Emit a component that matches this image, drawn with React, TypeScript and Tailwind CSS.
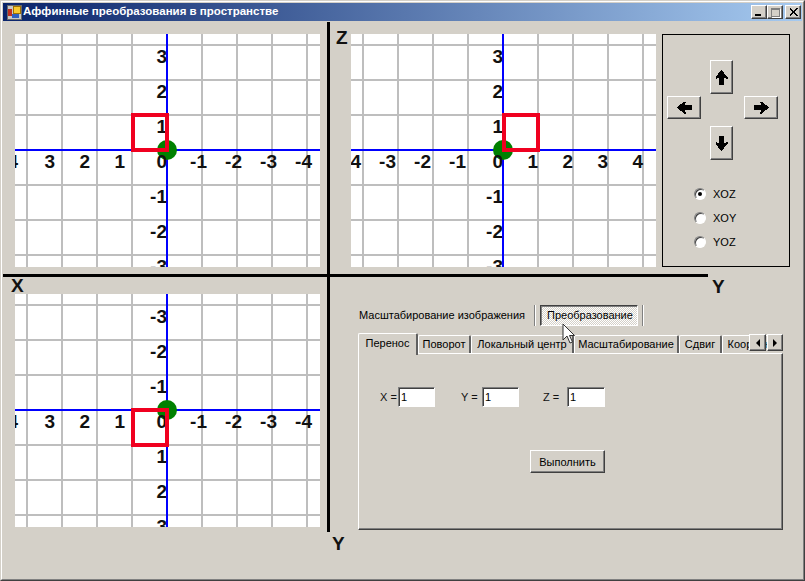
const font = "font-['Liberation_Sans',Arial,sans-serif]"
const raised = 'border border-t-white border-l-white border-r-[#404040] border-b-[#404040] shadow-[inset_-1px_-1px_0_#808080]'

const gridX = [12, 47, 82, 117, 187, 222, 257, 292]
const gridY = [11, 46, 81, 151, 186, 221]

type Label = [string, number, number]

const xLabelsA: Label[] = [['4', 3, 134], ['3', 40, 134], ['2', 75, 134], ['1', 110, 134], ['0', 152, 134], ['-1', 192, 134], ['-2', 227, 134], ['-3', 262, 134], ['-4', 297, 134]]
const xLabelsB: Label[] = [['4', 10, 134], ['-3', 45, 134], ['-2', 80, 134], ['-1', 115, 134], ['0', 152, 134], ['1', 187, 134], ['2', 222, 134], ['3', 257, 134], ['4', 292, 134]]
const yLabelsTop: Label[] = [['3', 152, 29], ['2', 152, 64], ['1', 152, 99], ['-1', 152, 169], ['-2', 152, 204], ['-3', 152, 239]]
const yLabelsBottom: Label[] = [['-3', 152, 29], ['-2', 152, 64], ['-1', 152, 99], ['1', 152, 169], ['2', 152, 204], ['3', 152, 239]]

const Plot = ({ labels, rx, ry }: { labels: Label[]; rx: number; ry: number }) => (
  <svg width="305" height="233" viewBox="0 0 305 233" className="block shrink-0 bg-white">
    {gridX.map((x) => <line key={x} x1={x} x2={x} y1={0} y2={233} stroke="#bebebe" strokeWidth="2" />)}
    {gridY.map((y) => <line key={y} x1={0} x2={305} y1={y} y2={y} stroke="#bebebe" strokeWidth="2" />)}
    <line x1={152} x2={152} y1={0} y2={233} stroke="#0000ff" strokeWidth="2" />
    <line x1={0} x2={305} y1={116} y2={116} stroke="#0000ff" strokeWidth="2" />
    <circle cx={152} cy={116} r={10} fill="#008000" />
    {labels.map(([t, x, y]) => (
      <text key={`${t}-${x}-${y}`} x={x} y={y} textAnchor="end" fontSize="19" fontWeight="700" fontFamily="Liberation Sans, Arial, sans-serif" fill="#111111">{t}</text>
    ))}
    <rect x={rx} y={ry} width={34} height={35} fill="none" stroke="#f00020" strokeWidth="4" />
  </svg>
)

const Arrow = ({ rotate }: { rotate: number }) => (
  <svg width="15" height="15" viewBox="0 0 15 15" style={{ transform: `rotate(${rotate}deg)` }} shapeRendering="crispEdges">
    <path d="M7.5 0 L13.5 7 L13.5 9 L10 7.5 L10 15 L5 15 L5 7.5 L1.5 9 L1.5 7 Z" fill="#000000" />
  </svg>
)

const Radio = ({ label, checked }: { label: string; checked?: boolean }) => (
  <div className="flex h-6 items-center gap-[7px] pl-[31px]">
    <span className="flex h-3 w-3 items-center justify-center rounded-full border border-t-[#808080] border-l-[#808080] border-r-white border-b-white bg-white shadow-[inset_1px_1px_0_#404040]">
      {checked && <span className="h-1 w-1 rounded-full bg-black" />}
    </span>
    <span className="text-[11px] leading-none text-black">{label}</span>
  </div>
)

const Tab = ({ label, width, active }: { label: string; width: string; active?: boolean }) => (
  <div className={`${width} shrink-0 whitespace-nowrap rounded-t-[2px] border-t border-l border-r-2 border-t-white border-l-white border-r-[#606060] bg-[#d4d0c8] text-center text-[11px] leading-[17px] text-black ${active ? 'relative z-10 -mt-[2px] h-[22px] pt-[1px]' : 'h-[18px]'}`}>
    {label}
  </div>
)

const Field = ({ label, labelWidth, inputWidth }: { label: string; labelWidth: string; inputWidth: string }) => (
  <div className="flex items-center">
    <span className={`${labelWidth} text-[11px] text-[#111111]`}>{label}</span>
    <input readOnly defaultValue="1" className={`${inputWidth} h-5 border border-t-[#808080] border-l-[#808080] border-r-white border-b-white bg-white px-[2px] text-[11px] text-black shadow-[inset_1px_1px_0_#404040] outline-none`} />
  </div>
)

export default function App() {
  return (
    <div className={`${font} relative h-[581px] w-[805px] overflow-hidden border border-t-[#d4d0c8] border-l-[#d4d0c8] border-r-[#404040] border-b-[#404040] bg-[#d4d0c8]`}>
      <div className="flex h-full flex-col border border-t-white border-l-white border-r-[#808080] border-b-[#808080] p-px">
        {/* title bar */}
        <div className="flex h-[18px] shrink-0 items-center bg-[linear-gradient(90deg,#0a246a,#a6caf0)] pl-[3px] pr-[1px]">
          <svg width="16" height="16" viewBox="0 0 16 16" className="mr-[1px] shrink-0" shapeRendering="crispEdges">
            <rect x="1" y="1" width="14" height="14" fill="#c8c8c8" stroke="#6a6a6a" />
            <rect x="7" y="2" width="7" height="7" fill="#f8c830" stroke="#a07000" />
            <rect x="2" y="5" width="4" height="7" fill="#c03020" />
            <rect x="6" y="10" width="7" height="4" fill="#3060c0" />
          </svg>
          <span className="text-[11.5px] font-bold leading-none text-white">Аффинные преобразования в пространстве</span>
          <div className="ml-auto flex">
            <div className={`${raised} flex h-[14px] w-4 items-end bg-[#d4d0c8] pb-[2px] pl-[3px]`}><span className="h-[2px] w-[6px] bg-black" /></div>
            <div className={`${raised} flex h-[14px] w-4 items-center justify-center bg-[#d4d0c8]`}><span className="h-[9px] w-[9px] border border-t-2 border-[#808080] shadow-[1px_1px_0_#ffffff]" /></div>
            <div className={`${raised} ml-[2px] flex h-[14px] w-4 items-center justify-center bg-[#d4d0c8]`}>
              <svg width="9" height="8" viewBox="0 0 9 8" shapeRendering="crispEdges"><path d="M1 0 L4.5 3 L8 0 L9 1 L5.5 4 L9 7 L8 8 L4.5 5 L1 8 L0 7 L3.5 4 L0 1 Z" fill="#000000" /></svg>
            </div>
          </div>
        </div>

        {/* upper row */}
        <div className="flex h-[253px] shrink-0">
          <div className="ml-3 mt-[13px]"><Plot labels={[...xLabelsA, ...yLabelsTop]} rx={118} ry={81} /></div>
          <div className="ml-[7px] mt-px w-[3px] bg-black" />
          <div className="w-[21px] pl-[6px] pt-[6px] text-[19px] font-bold leading-[22px] text-[#111111]">Z</div>
          <div className="mt-[13px]"><Plot labels={[...xLabelsB, ...yLabelsTop]} rx={153} ry={81} /></div>
          <div className="ml-[6px] mt-[13px] h-[233px] w-[128px] border border-black">
            <div className={`${raised} ml-[47px] mt-[25px] flex h-[34px] w-[23px] items-center justify-center`}><Arrow rotate={0} /></div>
            <div className="ml-1 mt-[2px] flex gap-[43px]">
              <div className={`${raised} flex h-[23px] w-[34px] items-center justify-center`}><Arrow rotate={270} /></div>
              <div className={`${raised} flex h-[23px] w-[34px] items-center justify-center`}><Arrow rotate={90} /></div>
            </div>
            <div className={`${raised} ml-[47px] mt-[7px] flex h-[34px] w-[23px] items-center justify-center`}><Arrow rotate={180} /></div>
            <div className="mt-[22px]">
              <Radio label="XOZ" checked />
              <Radio label="XOY" />
              <Radio label="YOZ" />
            </div>
          </div>
        </div>

        {/* horizontal axis line */}
        <div className="h-[3px] w-[705px] shrink-0 bg-black" />

        {/* lower row */}
        <div className="flex h-[255px] shrink-0">
          <div className="ml-3 w-[305px]">
            <div className="-ml-[4px] -mt-px h-[18px] text-[19px] font-bold leading-[19px] text-[#111111]">X</div>
            <Plot labels={[...xLabelsA, ...yLabelsBottom]} rx={118} ry={116} />
          </div>
          <div className="ml-[7px] w-[3px] bg-black" />
          <div className="flex-1">
            <div className="h-[28px] pl-[382px] text-[19px] font-bold leading-[19px] text-[#111111]">Y</div>
            {/* tool strip */}
            <div className="ml-[29px] flex h-[21px] items-center">
              <span className="w-[175px] text-[11px] text-black">Масштабирование изображения</span>
              <span className="h-[21px] w-[2px] border-l border-r border-l-[#808080] border-r-white" />
              <div className="ml-[4px] h-[21px] w-[98px] border border-t-[#404040] border-l-[#404040] border-r-white border-b-white bg-[image:repeating-conic-gradient(#ffffff_0%_25%,#d4d0c8_0%_50%)] bg-[length:2px_2px] pl-[6px] text-[11px] leading-[19px] text-black shadow-[inset_1px_1px_0_#808080]">Преобразование</div>
              <span className="ml-[4px] h-[21px] w-[2px] border-l border-r border-l-[#808080] border-r-white" />
            </div>
            {/* tabs */}
            <div className="relative ml-[28px] mt-[9px] flex h-[18px] w-[425px] items-start overflow-x-clip">
              <Tab label="Перенос" width="w-[60px]" active />
              <Tab label="Поворот" width="w-[53px]" />
              <Tab label="Локальный центр" width="w-[103px]" />
              <Tab label="Масштабирование" width="w-[105px]" />
              <Tab label="Сдвиг" width="w-[43px]" />
              <Tab label="Координаты" width="w-[74px]" />
              <div className="absolute -top-px right-0 flex">
                <div className={`${raised} flex h-[17px] w-[17px] items-center justify-center bg-[#d4d0c8]`}><span className="h-0 w-0 border-y-[4px] border-r-[4px] border-y-transparent border-r-black" /></div>
                <div className={`${raised} ml-px flex h-[17px] w-4 items-center justify-center bg-[#d4d0c8]`}><span className="h-0 w-0 border-y-[4px] border-l-[4px] border-y-transparent border-l-black" /></div>
              </div>
            </div>
            {/* tab page */}
            <div className="ml-[28px] h-[177px] w-[425px] border border-t-white border-l-white border-r-[#404040] border-b-[#404040] shadow-[inset_-1px_-1px_0_#808080]">
              <div className="flex pl-[21px] pt-[33px]">
                <Field label="X =" labelWidth="w-[18px]" inputWidth="w-[37px]" />
                <div className="ml-[26px]"><Field label="Y =" labelWidth="w-[21px]" inputWidth="w-[37px]" /></div>
                <div className="ml-[24px]"><Field label="Z =" labelWidth="w-[24px]" inputWidth="w-[38px]" /></div>
              </div>
              <button type="button" className={`${raised} ml-[171px] mt-[43px] block h-[23px] w-[75px] bg-[#d4d0c8] pt-px text-[11px] text-black`}>Выполнить</button>
            </div>
          </div>
        </div>

        <div className="ml-[329px] mt-[2px] text-[19px] font-bold leading-[19px] text-[#111111]">Y</div>
      </div>

      {/* mouse cursor */}
      <svg width="13" height="21" viewBox="0 0 13 21" className="absolute left-[561px] top-[322px]">
        <path d="M1 1 L1 17 L5 13 L8 20 L10.5 19 L7.5 12.5 L12.5 12.5 Z" fill="#ffffff" stroke="#303030" strokeWidth="1" />
      </svg>
    </div>
  )
}
